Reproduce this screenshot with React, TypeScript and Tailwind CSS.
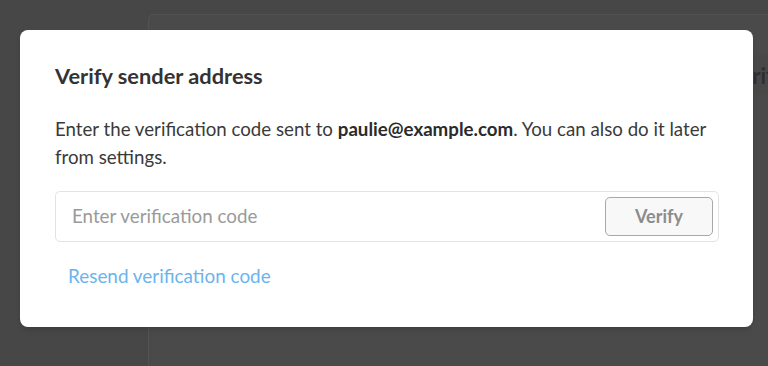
import React from "react";

export default function App() {
  return (
    <div
      className="relative w-[768px] h-[366px] overflow-hidden bg-[#474747]"
      style={{ fontFamily: "Lato, 'Open Sans', sans-serif" }}
    >
      {/* background page under the overlay */}
      <div className="absolute left-[148px] top-[14px] right-0 bottom-0 rounded-tl-md border-l border-t border-[#525252] bg-[#4a4a4a]">
        <div className="mt-[40px] flex h-[40px] items-center justify-end bg-[#484848]">
          <span className="-mr-[6px] text-[22px] font-bold text-[#2f2f2f]">Verif</span>
        </div>
      </div>

      {/* modal */}
      <div className="absolute left-[20px] top-[30px] flex h-[297px] w-[733px] flex-col rounded-lg bg-white pl-[35px] pr-[34px] pt-[31px] shadow-md">
        <h2 className="text-[21.8px] font-bold leading-[30px] text-[#333333]">Verify sender address</h2>
        <p className="mt-[24px] text-[18.7px] leading-[28px] text-[#3a3a3a]">
          Enter the verification code sent to <span className="font-bold text-[#2b2b2b]">paulie@example.com</span>. You can also do it
          later from settings.
        </p>
        <div className="mt-[20px] flex h-[51px] items-center rounded-[5px] border border-[#e3e3e3] pl-[16px] pr-[5px]">
          <span className="flex-1 text-[18.8px] text-[#9a9a9a]">Enter verification code</span>
          <button className="flex h-[39px] w-[108px] items-center justify-center rounded-[5px] border border-[#a8a8a8] bg-[#f8f8f8] text-[18px] font-bold text-[#8c8c8c]">
            Verify
          </button>
        </div>
        <a className="mt-[21px] ml-[13px] text-[18.9px] leading-[26px] text-[#6cb4ec]">Resend verification code</a>
      </div>
    </div>
  );
}
